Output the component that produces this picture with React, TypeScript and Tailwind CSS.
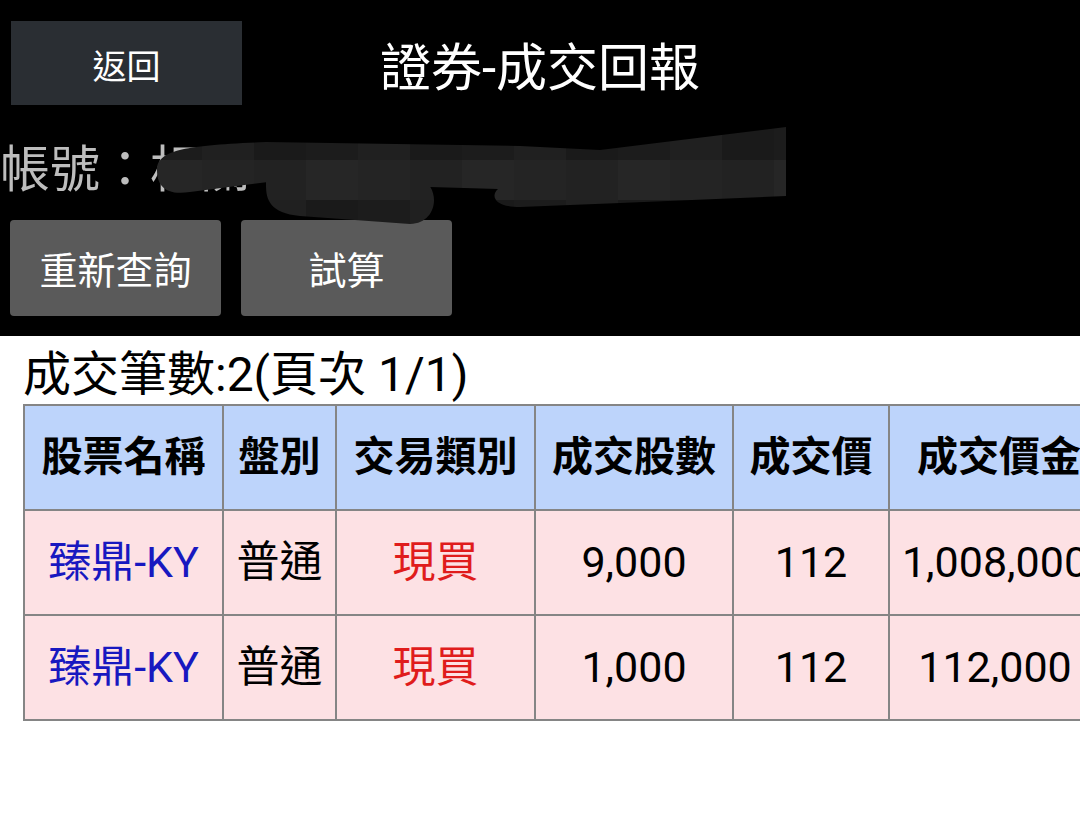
import React from "react";

const font = { fontFamily: "Roboto, 'Noto Sans CJK TC', sans-serif" };

const cols = [199, 113, 199, 198, 156, 232];
const headers = ["股票名稱", "盤別", "交易類別", "成交股數", "成交價", "成交價金額"];
const rows = [
  ["臻鼎-KY", "普通", "現買", "9,000", "112", "1,008,000"],
  ["臻鼎-KY", "普通", "現買", "1,000", "112", "112,000"],
];

function Scribble() {
  const band =
    "M 157 170 C 157 150 185 145 266 142 L 520 146 L 600 150 L 786 127 L 786 196 L 620 203 L 520 207 C 495 207 490 196 498 189 L 430 187 L 300 178 L 190 192 C 165 196 157 185 157 170 Z";
  const blob =
    "M 266 170 L 410 175 C 442 178 442 223 410 224 L 300 216 C 270 213 266 200 266 185 Z";
  const shades = ["#202020", "#242424", "#1c1c1c", "#262626", "#1a1a1a", "#222222"];
  const blocks: React.ReactNode[] = [];
  let k = 0;
  for (let x = 150; x < 800; x += 52) {
    for (let y = 120; y < 230; y += 40) {
      blocks.push(
        <rect key={k} x={x} y={y} width={52} height={40} fill={shades[(k * 7 + Math.floor(x / 52)) % shades.length]} />
      );
      k++;
    }
  }
  return (
    <svg
      className="absolute left-0 top-0 pointer-events-none"
      width={1080}
      height={336}
      viewBox="0 0 1080 336"
    >
      <defs>
        <clipPath id="scr">
          <path d={band} />
          <path d={blob} />
        </clipPath>
      </defs>
      <g clipPath="url(#scr)">{blocks}</g>
    </svg>
  );
}

export default function App() {
  return (
    <div className="relative w-[1080px] h-[826px] bg-white overflow-hidden" style={font}>
      <div className="bg-black h-[336px] pt-[21px]">
        <div className="grid grid-cols-[1fr_auto_1fr] items-center">
          <button className="justify-self-start ml-[11px] w-[231px] h-[84px] pt-[8px] bg-[#2a2e33] text-white text-[34px] leading-none">
            返回
          </button>
          <div className="text-white text-[51px] leading-none mt-[10px]">證券-成交回報</div>
          <div />
        </div>
        <div className="mt-[35px] text-[#bdbdbd] text-[50px] leading-[60px] whitespace-nowrap">
          帳號：相關：0000000
        </div>
        <div className="mt-[20px] ml-[10px] flex gap-[20px]">
          <button className="w-[211px] h-[96px] pt-[5px] rounded-[4px] bg-[#5a5a5a] text-white text-[38px] leading-none">
            重新查詢
          </button>
          <button className="w-[211px] h-[96px] pt-[5px] rounded-[4px] bg-[#5a5a5a] text-white text-[38px] leading-none">
            試算
          </button>
        </div>
      </div>
      <div className="pl-[23px] pt-[12px]">
        <div className="text-black text-[48px] leading-[54px] whitespace-nowrap">成交筆數:2(頁次 1/1)</div>
        <table className="mt-[2px] border-collapse table-fixed w-[1097px]">
          <colgroup>
            {cols.map((w, i) => (
              <col key={i} style={{ width: w }} />
            ))}
          </colgroup>
          <thead>
            <tr className="h-[105px] bg-[#bdd4fb]">
              {headers.map((h, i) => (
                <th
                  key={h}
                  className={
                    i === 5
                      ? "border-2 border-[#858585] text-[41px] font-bold text-black text-left pl-[27px] whitespace-nowrap overflow-hidden pr-0 py-0"
                      : "border-2 border-[#858585] text-[41px] font-bold text-black text-center whitespace-nowrap p-0"
                  }
                >
                  {h}
                </th>
              ))}
            </tr>
          </thead>
          <tbody>
            {rows.map((r, i) => (
              <tr key={i} className="h-[105px] bg-[#fde1e4]">
                {r.map((c, j) => (
                  <td
                    key={j}
                    className={
                      j === 5
                        ? "border-2 border-[#858585] text-[43px] text-center whitespace-nowrap pl-0 pr-[20px] py-0 text-black"
                        : "border-2 border-[#858585] text-[43px] text-center whitespace-nowrap p-0 " +
                          (j === 0 ? "text-[#1818c0]" : j === 2 ? "text-[#e01c1c]" : "text-black")
                    }
                  >
                    {c}
                  </td>
                ))}
              </tr>
            ))}
          </tbody>
        </table>
      </div>
      <Scribble />
    </div>
  );
}
